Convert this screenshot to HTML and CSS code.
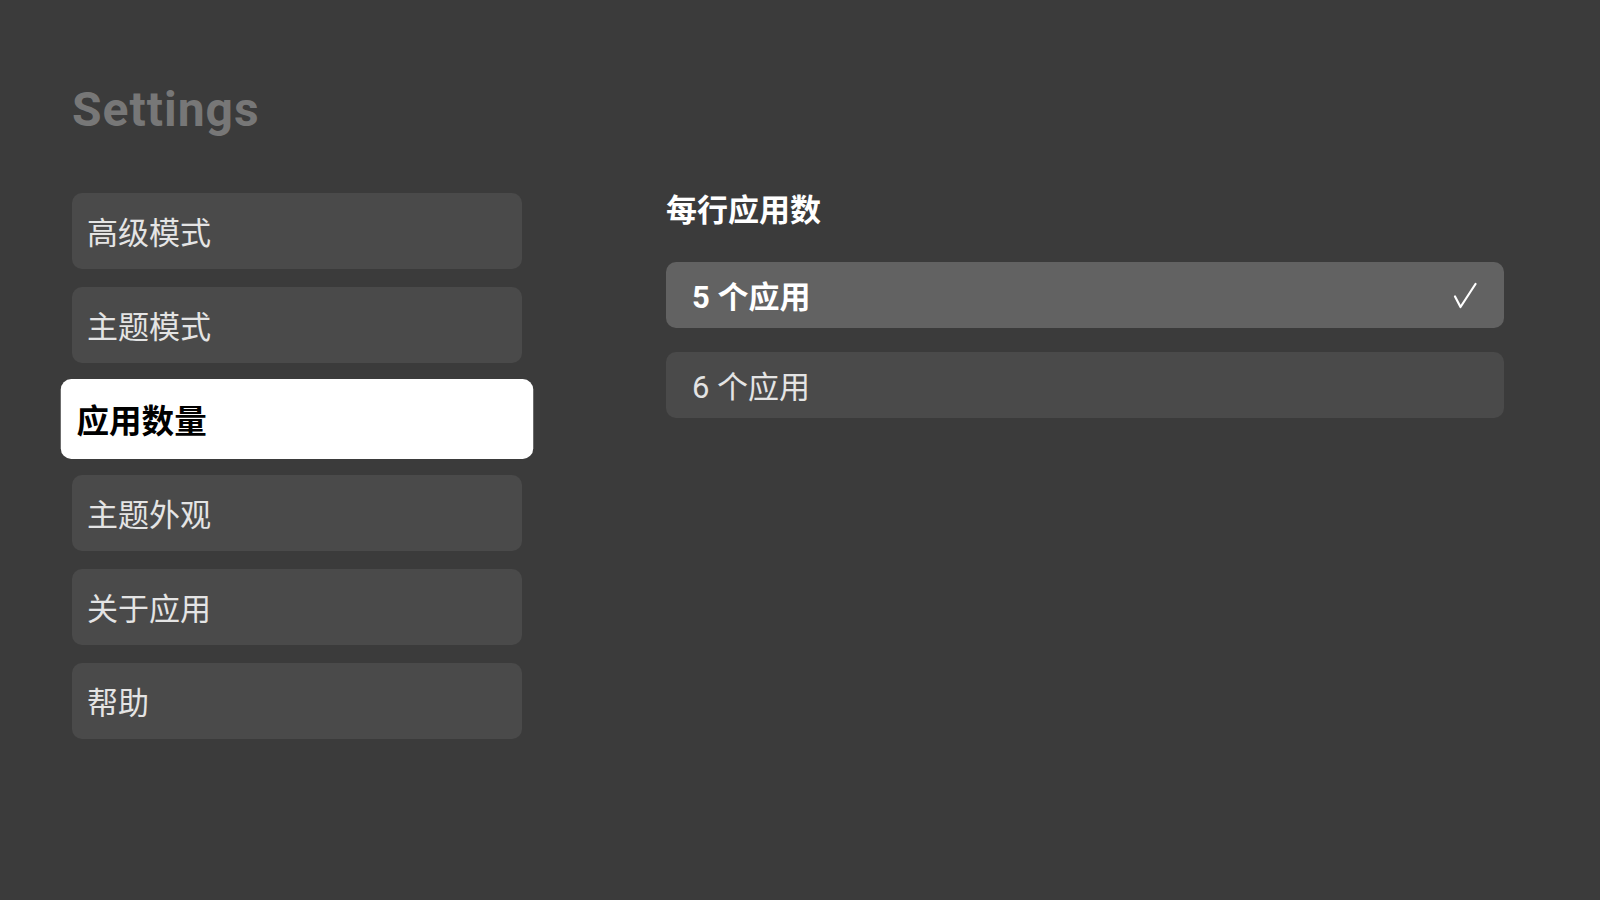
FILE: index.html
```html
<!DOCTYPE html>
<html lang="zh-CN">
<head>
<meta charset="utf-8">
<title>Settings</title>
<link rel="stylesheet" href="styles.css">
</head>
<body>
<div class="page">
  <h1 class="title">Settings</h1>
  <div class="columns">
    <nav class="menu">
      <div class="menu-item">高级模式</div>
      <div class="menu-item">主题模式</div>
      <div class="menu-item active">应用数量</div>
      <div class="menu-item">主题外观</div>
      <div class="menu-item">关于应用</div>
      <div class="menu-item">帮助</div>
    </nav>
    <section class="panel">
      <h2 class="panel-title">每行应用数</h2>
      <div class="options">
        <div class="option selected">
          <span>5 个应用</span>
          <svg class="check" width="24" height="27" viewBox="0 0 24 27"><path d="M2 14.5 L7.5 25 L22.5 2" fill="none" stroke="#ffffff" stroke-width="2.2" stroke-linecap="round" stroke-linejoin="round"/></svg>
        </div>
        <div class="option"><span>6 个应用</span></div>
      </div>
    </section>
  </div>
</div>
</body>
</html>
```

FILE: styles.css
```css
html, body {
  margin: 0;
  padding: 0;
  background: #3b3b3b;
}

body {
  width: 1600px;
  height: 900px;
  overflow: hidden;
  font-family: Roboto, "Noto Sans CJK SC", sans-serif;
}

.page {
  padding: 82px 96px 0 72px;
}

.title {
  margin: 0;
  font-family: Roboto, "Noto Sans", sans-serif;
  font-weight: 700;
  font-size: 48px;
  line-height: 56px;
  color: #777777;
  letter-spacing: 1px;
}

.columns {
  display: flex;
  gap: 144px;
  margin-top: 55px;
}

.menu {
  width: 450px;
  flex: none;
  display: flex;
  flex-direction: column;
  gap: 18px;
}

.menu-item {
  height: 76px;
  box-sizing: border-box;
  display: flex;
  align-items: center;
  padding-left: 15px;
  padding-top: 4px;
  background: #4a4a4a;
  border-radius: 10px;
  color: #e4e4e4;
  font-size: 31px;
  line-height: 1;
}

.menu-item.active {
  background: #ffffff;
  color: #000000;
  font-weight: 700;
  transform: scale(1.05);
}

.panel {
  flex: 1;
}

.panel-title {
  margin: 3px 0 0;
  font-size: 31px;
  font-weight: 700;
  line-height: 30px;
  color: #ffffff;
}

.options {
  margin-top: 36px;
  display: flex;
  flex-direction: column;
  gap: 24px;
}

.option {
  height: 66px;
  box-sizing: border-box;
  display: flex;
  align-items: center;
  justify-content: space-between;
  padding: 4px 27px 0 26px;
  background: #4a4a4a;
  border-radius: 10px;
  color: #e4e4e4;
  font-size: 31px;
  line-height: 1;
}

.option.selected {
  background: #626262;
  color: #ffffff;
  font-weight: 700;
}

.check {
  display: block;
  margin-top: -4px;
}
```
